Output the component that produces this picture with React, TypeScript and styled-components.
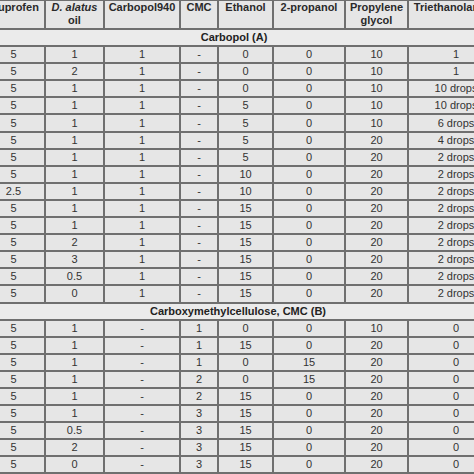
import styled, { createGlobalStyle } from "styled-components";

const GlobalStyle = createGlobalStyle`
  html, body {
    margin: 0;
    padding: 0;
    background: #e6e6e6;
  }
`;

const HEADERS: { top: React.ReactNode; bottom?: string }[] = [
  { top: "Ibuprofen" },
  { top: <i>D. alatus</i>, bottom: "oil" },
  { top: "Carbopol940" },
  { top: "CMC" },
  { top: "Ethanol" },
  { top: "2-propanol" },
  { top: "Propylene", bottom: "glycol" },
  { top: "Triethanolamine" },
];

const COL_WIDTHS = [63, 59, 76, 38, 55, 72, 63, 96];

const CARBOPOL_ROWS = [
  ["5", "1", "1", "-", "0", "0", "10", "1"],
  ["5", "2", "1", "-", "0", "0", "10", "1"],
  ["5", "1", "1", "-", "0", "0", "10", "10 drops"],
  ["5", "1", "1", "-", "5", "0", "10", "10 drops"],
  ["5", "1", "1", "-", "5", "0", "10", "6 drops"],
  ["5", "1", "1", "-", "5", "0", "20", "4 drops"],
  ["5", "1", "1", "-", "5", "0", "20", "2 drops"],
  ["5", "1", "1", "-", "10", "0", "20", "2 drops"],
  ["2.5", "1", "1", "-", "10", "0", "20", "2 drops"],
  ["5", "1", "1", "-", "15", "0", "20", "2 drops"],
  ["5", "1", "1", "-", "15", "0", "20", "2 drops"],
  ["5", "2", "1", "-", "15", "0", "20", "2 drops"],
  ["5", "3", "1", "-", "15", "0", "20", "2 drops"],
  ["5", "0.5", "1", "-", "15", "0", "20", "2 drops"],
  ["5", "0", "1", "-", "15", "0", "20", "2 drops"],
];

const CMC_ROWS = [
  ["5", "1", "-", "1", "0", "0", "10", "0"],
  ["5", "1", "-", "1", "15", "0", "20", "0"],
  ["5", "1", "-", "1", "0", "15", "20", "0"],
  ["5", "1", "-", "2", "0", "15", "20", "0"],
  ["5", "1", "-", "2", "15", "0", "20", "0"],
  ["5", "1", "-", "3", "15", "0", "20", "0"],
  ["5", "0.5", "-", "3", "15", "0", "20", "0"],
  ["5", "2", "-", "3", "15", "0", "20", "0"],
  ["5", "0", "-", "3", "15", "0", "20", "0"],
];

const Frame = styled.div`
  width: 474px;
  height: 474px;
  overflow: hidden;
  background: #e6e6e6;
  transform: translateZ(0);
  -webkit-font-smoothing: antialiased;
`;

const Table = styled.table`
  margin: -1px 0 0 -19px;
  border-collapse: collapse;
  table-layout: fixed;
  width: ${COL_WIDTHS.reduce((a, b) => a + b, 0)}px;
  font-family: "Liberation Sans", Arial, sans-serif;
  font-size: 11px;
  color: #333;
  background: #e6e6e6;
`;

const HeadCell = styled.th`
  height: 27px;
  padding: 0 2px;
  border: 2px solid #6f6f6f;
  font-weight: bold;
  line-height: 13px;
  text-align: center;
  vertical-align: top;
  white-space: nowrap;
  color: #2a2a2a;
`;

const SectionCell = styled.td<{ $shift: number }>`
  height: 15.1px;
  padding: 0 ${(p) => p.$shift}px 0 0;
  border: 2px solid #6f6f6f;
  font-weight: bold;
  line-height: 13px;
  text-align: center;
  background: #ebebeb;
  color: #222;
`;

const Cell = styled.td`
  height: 15.1px;
  padding: 0;
  border: 2px solid #6f6f6f;
  text-align: center;
  line-height: 13px;
  white-space: nowrap;
`;

function Section({ title, shift }: { title: string; shift: number }) {
  return (
    <tr>
      <SectionCell colSpan={8} $shift={shift}>
        {title}
      </SectionCell>
    </tr>
  );
}

function DataRows({ rows }: { rows: string[][] }) {
  return (
    <>
      {rows.map((row, i) => (
        <tr key={i}>
          {row.map((v, j) => (
            <Cell key={j}>{v}</Cell>
          ))}
        </tr>
      ))}
    </>
  );
}

export default function App() {
  return (
    <>
      <GlobalStyle />
      <Frame>
        <Table>
          <colgroup>
            {COL_WIDTHS.map((w, i) => (
              <col key={i} style={{ width: w }} />
            ))}
          </colgroup>
          <thead>
            <tr>
              {HEADERS.map((h, i) => (
                <HeadCell key={i}>
                  {h.top}
                  {h.bottom && (
                    <>
                      <br />
                      {h.bottom}
                    </>
                  )}
                </HeadCell>
              ))}
            </tr>
          </thead>
          <tbody>
            <Section title="Carbopol (A)" shift={18} />
            <DataRows rows={CARBOPOL_ROWS} />
            <Section title="Carboxymethylcellulose, CMC (B)" shift={10} />
            <DataRows rows={CMC_ROWS} />
          </tbody>
        </Table>
      </Frame>
    </>
  );
}
